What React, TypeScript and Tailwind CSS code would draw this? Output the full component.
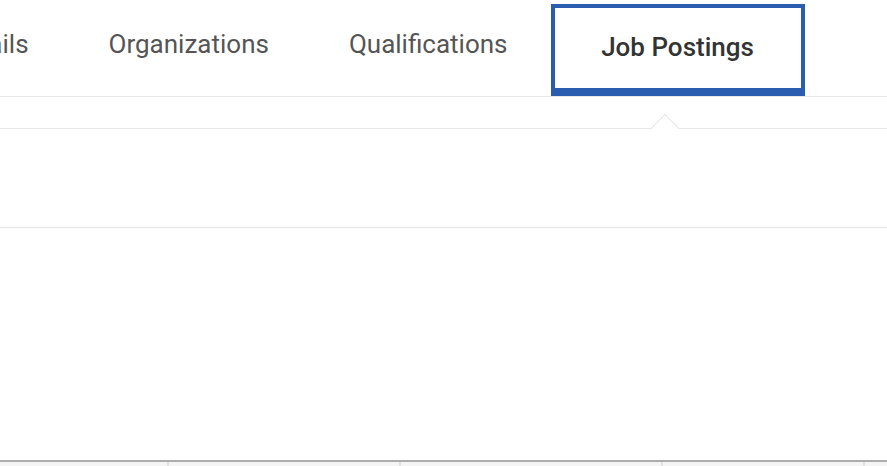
import React from "react";

export default function App() {
  const font = { fontFamily: "Roboto, 'Noto Sans', sans-serif" };
  return (
    <div className="w-[887px] h-[466px] overflow-hidden bg-white flex flex-col" style={font}>
      <div className="h-[96px] shrink-0 flex pt-[4px] overflow-hidden">
        <div className="flex items-center h-[92px] pb-[12px] ml-[-51px] pr-[40px] text-[26px] text-[#555555]">Details</div>
        <div className="flex items-center h-[92px] pb-[12px] px-[40px] text-[26px] text-[#555555]">Organizations</div>
        <div className="flex items-center h-[92px] pb-[12px] px-[40px] text-[26px] text-[#555555]">Qualifications</div>
        <div className="flex items-center justify-center h-[92px] pb-[2px] ml-[3px] w-[254px] border-[4px] border-b-[8px] border-[#2a5db0] text-[26px] font-medium text-[#333333]">
          Job Postings
        </div>
      </div>
      <div className="h-px shrink-0 bg-[#e6e6e6]" />
      <div className="h-[31px] shrink-0" />
      <div className="h-px shrink-0 bg-[#e6e6e6] relative">
        <div className="absolute left-[655px] top-[-10px] w-[20px] h-[20px] rotate-45 bg-white border-t border-l border-[#e6e6e6]" />
      </div>
      <div className="h-[98px] shrink-0" />
      <div className="h-px shrink-0 bg-[#e6e6e6]" />
      <div className="flex-1" />
      <div className="h-[2px] shrink-0 bg-[#adadad]" />
      <div className="h-[4px] shrink-0 bg-[#f5f5f5] grid grid-cols-[167px_232px_262px_202px_1fr]">
        <div />
        <div className="border-l-2 border-[#e2e2e2]" />
        <div className="border-l-2 border-[#e2e2e2]" />
        <div className="border-l-2 border-[#e2e2e2]" />
        <div className="border-l-2 border-[#e2e2e2]" />
      </div>
    </div>
  );
}
